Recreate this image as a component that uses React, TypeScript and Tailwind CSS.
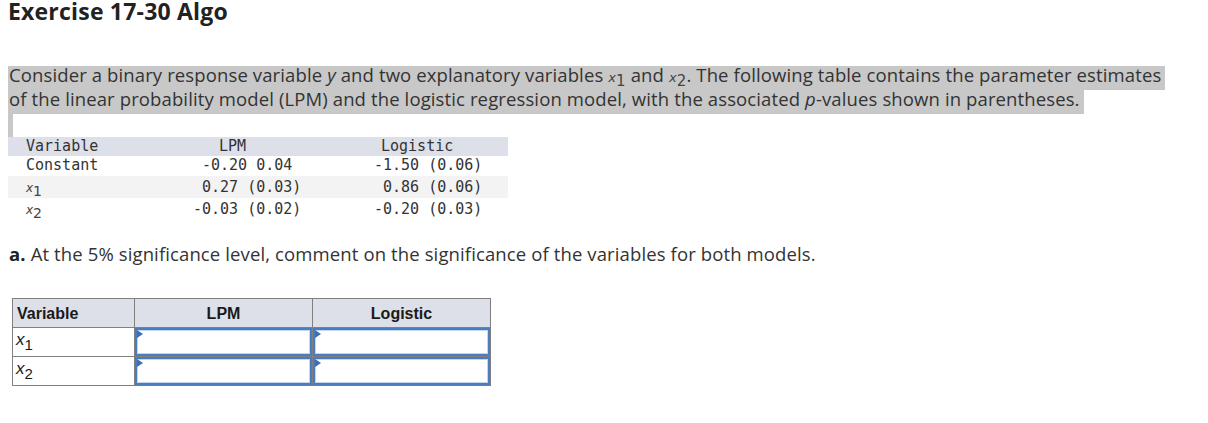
import React from "react";

const body = "font-['Open_Sans','Noto_Sans',sans-serif]";

function MathX({ sub, size = "text-[14px]", subSize = "text-[15px]" }: { sub: string; size?: string; subSize?: string }) {
    return (
        <span className="font-['DejaVu_Sans',sans-serif] text-[#444] leading-none">
            <i className={size}>x</i>
            <span className={`${subSize} relative top-[4px] leading-none`}>{sub}</span>
        </span>
    );
}

function AnswerInput() {
    return (
        <div className="relative h-full w-full border-2 border-[#4a7cc0] bg-white shadow-[inset_0_0_0_1px_#c4d6ee]">
            <span className="absolute left-[0px] top-[0px] h-0 w-0 border-y-[4px] border-l-[6px] border-y-transparent border-l-[#3d6fb8]" />
        </div>
    );
}

export default function App() {
    const line = "w-fit h-[24px] bg-[#c8c8c8] text-[18.5px] tracking-[0.12px] leading-[18px] pl-[1px] pr-[4px] whitespace-nowrap";

    return (
        <div className={`w-[1208px] h-[423px] bg-white overflow-hidden text-[#333] ${body}`}>
            <h1 className="pl-[8px] pt-[1px] text-[23px] tracking-[0.2px] font-bold leading-[20px] text-[#222]">Exercise 17-30 Algo</h1>

            <div className="mt-[45px] pl-[8px]">
                <div className={line}>
                    Consider a binary response variable <i>y</i> and two explanatory variables <MathX sub="1" size="text-[13px]" /> and{" "}
                    <MathX sub="2" size="text-[13px]" />. The following table contains the parameter estimates{" "}
                </div>
                <div className={line}>
                    of the linear probability model (LPM) and the logistic regression model, with the associated <i>p</i>-values shown in parentheses.{" "}
                </div>
                <div className="w-[5px] h-[23px] bg-[#c8c8c8]" />

                <div className="w-[500px] font-['DejaVu_Sans_Mono',monospace] text-[15px] leading-[19px] text-[#333] whitespace-pre">
                    <div className="grid grid-cols-[185px_181px_134px] h-[19px] bg-[#dde0e9]">
                        <div className="pl-[18px]">Variable</div>
                        <div className="pl-[26px]">LPM</div>
                        <div className="pl-[7px]">Logistic</div>
                    </div>
                    <div className="grid grid-cols-[185px_181px_134px] h-[20px]">
                        <div className="pl-[18px]">Constant</div>
                        <div className="pl-[9px]">-0.20 0.04</div>
                        <div>-1.50 (0.06)</div>
                    </div>
                    <div className="grid grid-cols-[185px_181px_134px] h-[22px] pt-[2px] bg-[#f3f3f3]">
                        <div className="pl-[18px]"><MathX sub="1" size="text-[12px]" subSize="text-[14px]" /></div>
                        <div> 0.27 (0.03)</div>
                        <div> 0.86 (0.06)</div>
                    </div>
                    <div className="grid grid-cols-[185px_181px_134px] h-[22px] pt-[2px]">
                        <div className="pl-[18px]"><MathX sub="2" size="text-[12px]" subSize="text-[14px]" /></div>
                        <div>-0.03 (0.02)</div>
                        <div>-0.20 (0.03)</div>
                    </div>
                </div>

                <p className="mt-[25px] pl-[1px] text-[18.5px] tracking-[0.12px] leading-[18px]">
                    <b className="text-[#222]">a.</b> At the 5% significance level, comment on the significance of the variables for both models.
                </p>
            </div>

            <div className="mt-[35px] ml-[12px] w-fit border-l border-t border-[#808080] font-['Liberation_Sans',Arial,sans-serif] text-[#1a1a1a]">
                <div className="grid grid-cols-[122px_178px_178px] bg-[#dde0e9] text-[16px] font-bold">
                    <div className="h-[29px] border-r border-b border-[#808080] pl-[4px] pt-[1px] leading-[28px]">Variable</div>
                    <div className="h-[29px] border-r border-b border-[#808080] pt-[1px] leading-[28px] text-center">LPM</div>
                    <div className="h-[29px] border-r border-b border-[#808080] pt-[1px] leading-[28px] text-center">Logistic</div>
                </div>
                {["1", "2"].map((s) => (
                    <div key={s} className="grid grid-cols-[122px_178px_178px]">
                        <div className="h-[29px] border-r border-b border-[#808080] pl-[3px] leading-[24px]">
                            <i className="text-[17px]">x</i>
                            <span className="text-[15px] relative top-[5px]">{s}</span>
                        </div>
                        <div className="h-[29px] border-r border-b border-[#808080]">
                            <AnswerInput />
                        </div>
                        <div className="h-[29px] border-r border-b border-[#808080]">
                            <AnswerInput />
                        </div>
                    </div>
                ))}
            </div>
        </div>
    );
}
